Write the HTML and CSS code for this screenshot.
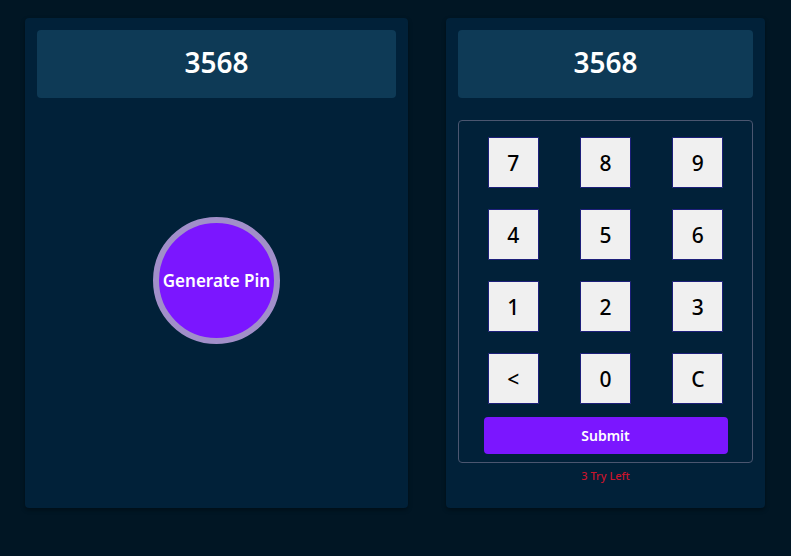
FILE: index.html
```html
<!DOCTYPE html>
<html lang="en">
<head>
    <meta charset="utf-8">
    <meta name="viewport" content="width=device-width, initial-scale=1.0">
    <title>pin matcher</title>
    <link rel="stylesheet" href="styles.css">
</head>
<body>
    <div class="wrapper">
        <div class="panel panel-left">
            <div class="display">3568</div>
            <button class="generate-btn">Generate Pin</button>
        </div>

        <div class="panel panel-right">
            <div class="display">3568</div>
            <div class="keypad">
                <div class="keys">
                    <button class="key">7</button>
                    <button class="key">8</button>
                    <button class="key">9</button>
                    <button class="key">4</button>
                    <button class="key">5</button>
                    <button class="key">6</button>
                    <button class="key">1</button>
                    <button class="key">2</button>
                    <button class="key">3</button>
                    <button class="key">&lt;</button>
                    <button class="key">0</button>
                    <button class="key">C</button>
                </div>
                <button class="submit-btn">Submit</button>
            </div>
            <p class="tries">3 Try Left</p>
        </div>
    </div>
</body>
</html>
```

FILE: styles.css
```css
* {
    font-family: 'Noto Sans', 'Open Sans', sans-serif;
    box-sizing: border-box;
}

body {
    margin: 0;
    background-color: #011624;
    height: 100vh;
}

.wrapper {
    display: flex;
    gap: 38px;
    padding: 18px 0 0 25px;
}

.panel {
    background: #012139;
    border-radius: 4px;
    box-shadow: 0 2px 4px rgba(0, 0, 0, 0.35);
    height: 490px;
    padding: 12px;
    display: flex;
    flex-direction: column;
}

.panel-left {
    width: 383px;
    align-items: center;
}

.panel-right {
    width: 319px;
}

.display {
    width: 100%;
    height: 68px;
    padding-bottom: 4px;
    background: #0e3a56;
    border-radius: 4px;
    color: white;
    font-size: 28px;
    font-weight: 600;
    display: flex;
    justify-content: center;
    align-items: center;
}

.generate-btn {
    margin-top: 119px;
    width: 127px;
    height: 127px;
    border-radius: 50%;
    border: 6px solid #a18fc9;
    background: #7b16ff;
    color: white;
    font-size: 17px;
    font-weight: 600;
    padding: 0;
    cursor: pointer;
}

.keypad {
    margin-top: 22px;
    border: 1px solid #4b5670;
    border-radius: 4px;
    padding: 16px 8px 8px;
    display: flex;
    flex-direction: column;
    align-items: center;
}

.keys {
    width: 100%;
    display: grid;
    grid-template-columns: repeat(3, 1fr);
    row-gap: 21px;
    justify-items: center;
}

.key {
    width: 51px;
    height: 51px;
    background: #f0f0f0;
    border: 1px solid #1d1f7a;
    border-radius: 1px;
    color: black;
    font-size: 21px;
    font-weight: 500;
    padding: 0;
    cursor: pointer;
}

.submit-btn {
    margin-top: 13px;
    width: 244px;
    height: 37px;
    background: #7b16ff;
    color: white;
    border: none;
    border-radius: 4px;
    font-size: 14px;
    font-weight: 600;
    cursor: pointer;
}

.tries {
    margin: 5px 0 0;
    text-align: center;
    color: #c8142c;
    font-size: 11px;
    font-weight: 500;
}
```
